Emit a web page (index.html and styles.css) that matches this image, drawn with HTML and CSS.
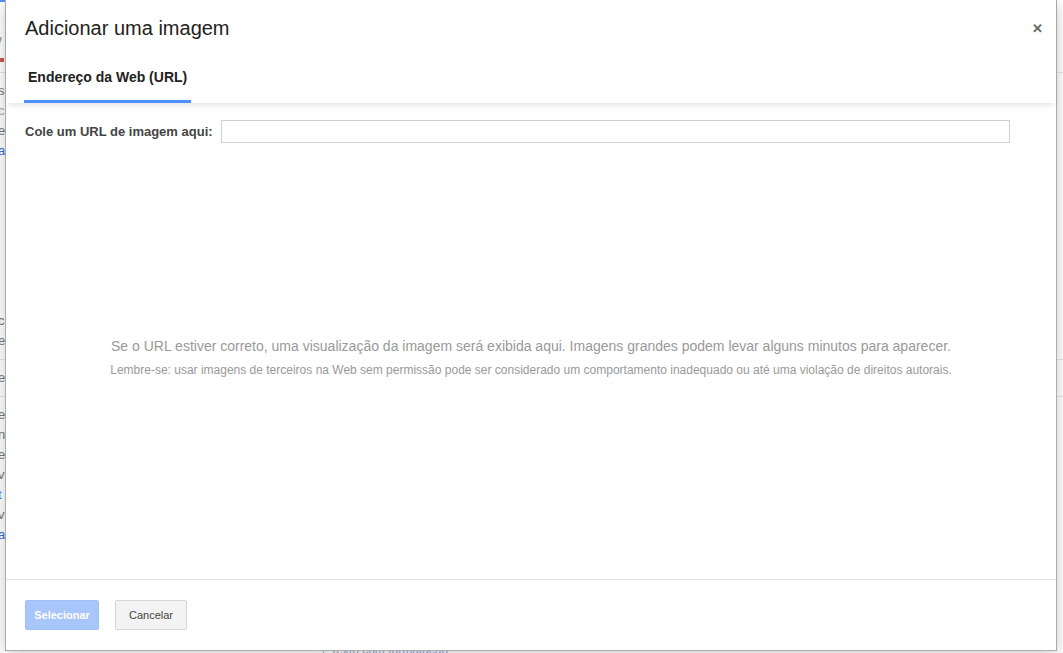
FILE: index.html
```html
<!DOCTYPE html>
<html lang="pt-BR">
<head>
    <meta charset="UTF-8">
    <title>Adicionar uma imagem</title>
    <link rel="stylesheet" href="styles.css">
</head>
<body>
    <div class="page">
        <div class="page-top"></div>
        <div class="page-line">/</div>
        <div class="page-mark"></div>
        <div class="page-rule"></div>
        <div class="page-line">s</div>
        <div class="page-line faint">c</div>
        <div class="page-line">e</div>
        <div class="page-line link">a</div>
        <div class="page-gap"></div>
        <div class="page-line">c</div>
        <div class="page-line">e</div>
        <div class="page-rule"></div>
        <div class="page-line">e</div>
        <div class="page-rule"></div>
        <div class="page-line">e</div>
        <div class="page-line">n</div>
        <div class="page-line">e</div>
        <div class="page-line">v</div>
        <div class="page-line link">t</div>
        <div class="page-line">v</div>
        <div class="page-line link">a</div>
        <div class="page-foot">+ Texto com formatação</div>
    </div>

    <div class="dialog">
        <div class="dialog-head">
            <div class="dialog-title">Adicionar uma imagem</div>
            <span class="dialog-close">&#x2715;</span>
            <div class="tabs">
                <div class="tab active">Endereço da Web (URL)</div>
            </div>
        </div>

        <div class="dialog-body">
            <div class="url-row">
                <label for="url">Cole um URL de imagem aqui:</label>
                <input id="url" type="text">
            </div>
            <div class="preview">
                <div class="preview-main">Se o URL estiver correto, uma visualização da imagem será exibida aqui. Imagens grandes podem levar alguns minutos para aparecer.</div>
                <div class="preview-note">Lembre-se: usar imagens de terceiros na Web sem permissão pode ser considerado um comportamento inadequado ou até uma violação de direitos autorais.</div>
            </div>
        </div>

        <div class="dialog-foot">
            <button class="btn btn-primary" disabled>Selecionar</button>
            <button class="btn">Cancelar</button>
        </div>
    </div>
</body>
</html>
```

FILE: styles.css
```css
body {
    margin: 0;
    height: 653px;
    overflow: hidden;
    background-color: #fff;
    font-family: Arial, "Liberation Sans", sans-serif;
    position: relative;
}

/* page behind the dialog */
.page {
    color: #777;
    font-size: 13px;
}

.page-top {
    height: 2px;
    width: 40px;
    background-color: #4d90fe;
    margin-bottom: 30px;
}

.page-line {
    height: 20px;
    line-height: 20px;
    margin-left: -2px;
}

.page-line.faint {
    color: #aaa;
}

.page-line.link {
    color: #3a6fd8;
}

.page-mark {
    width: 4px;
    height: 4px;
    background-color: #c55;
    margin: 6px 0 10px;
}

.page-rule {
    border-top: 1px solid #e5e5e5;
    margin: 8px 0;
}

.page-gap {
    height: 150px;
}

.page-foot {
    position: absolute;
    top: 643px;
    left: 320px;
    color: #8aa4d8;
    font-size: 12px;
}

/* dialog */
.dialog {
    position: absolute;
    top: -1px;
    left: 5px;
    width: 1052px;
    height: 652px;
    background-color: #fff;
    border: 1px solid #acacac;
    border-top: none;
    box-sizing: border-box;
    box-shadow: 0 4px 16px rgba(0, 0, 0, 0.2);
    display: flex;
    flex-direction: column;
}

.dialog-head {
    position: relative;
    padding: 0 18px;
    box-shadow: 0 4px 6px -2px rgba(0, 0, 0, 0.12);
    z-index: 1;
}

.dialog-title {
    padding-top: 17px;
    padding-left: 1px;
    font-size: 20px;
    line-height: 24px;
    color: #222;
}

.dialog-close {
    position: absolute;
    top: 22px;
    right: 13px;
    font-size: 13px;
    font-weight: bold;
    color: #666;
    cursor: pointer;
}

.tabs {
    display: flex;
    margin-top: 28px;
}

.tab {
    padding: 0 4px 14px;
    font-size: 14px;
    font-weight: bold;
    color: #222;
    line-height: 18px;
    border-bottom: 3px solid transparent;
}

.tab.active {
    border-bottom-color: #4d90fe;
}

.dialog-body {
    flex-grow: 1;
    display: flex;
    flex-direction: column;
    padding: 17px 46px 0 19px;
}

.url-row {
    display: flex;
    align-items: center;
}

.url-row label {
    font-size: 13px;
    font-weight: bold;
    color: #444;
    margin-right: 8px;
}

.url-row input {
    flex-grow: 1;
    height: 23px;
    box-sizing: border-box;
    border: 1px solid #d0d0d0;
    padding: 0 4px;
    outline: none;
}

.preview {
    flex-grow: 1;
    display: flex;
    flex-direction: column;
    justify-content: center;
    align-items: center;
    text-align: center;
    color: #999;
    padding-bottom: 9px;
    margin-right: -27px;
}

.preview-main {
    font-size: 14px;
    line-height: 18px;
}

.preview-note {
    font-size: 12px;
    line-height: 14px;
    margin-top: 8px;
}

.dialog-foot {
    border-top: 1px solid #e5e5e5;
    padding: 20px 19px;
    display: flex;
    gap: 16px;
}

.btn {
    height: 30px;
    padding: 0 8px;
    width: 72px;
    font-family: Arial, "Liberation Sans", sans-serif;
    font-size: 11px;
    color: #444;
    background-color: #f3f3f3;
    border: 1px solid #d6d6d6;
    border-radius: 2px;
    cursor: pointer;
}

.btn-primary {
    color: #fff;
    font-weight: bold;
    background-color: #a9c6fb;
    border-color: #a0c0f8;
    width: 74px;
    cursor: default;
}
```
